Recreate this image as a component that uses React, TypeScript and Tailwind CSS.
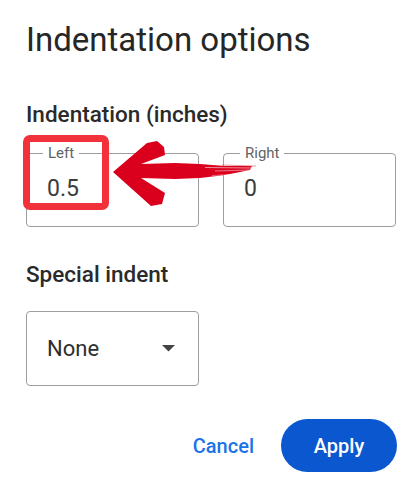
import React from "react"

function Field({ label, value }: { label: string; value: string }) {
  return (
    <div className="relative h-[74px] w-[173px] rounded-[4px] border border-[#9e9e9e]">
      <span className="absolute left-[16px] top-[-11px] bg-white px-[5px] text-[15px] leading-[20px] text-[#5f6368]">
        {label}
      </span>
      <div className="pl-[20px] pt-[21px] text-[23px] leading-[28px] text-[#3c3c3c]">{value}</div>
    </div>
  )
}

export default function App() {
  return (
    <div className="relative h-[490px] w-[418px] overflow-hidden bg-white pl-[26px] pr-[21px] font-['Roboto','Liberation_Sans',sans-serif]">
      <h1 className="pt-[20px] text-[33px] leading-[40px] text-[#262626]">Indentation options</h1>

      <h2 className="mt-[40px] text-[22.5px] font-medium leading-[28px] text-[#2a2a2a]">Indentation (inches)</h2>

      <div className="mt-[25px] flex gap-[24px]">
        <Field label="Left" value="0.5" />
        <Field label="Right" value="0" />
      </div>

      <h2 className="mt-[33px] text-[22.5px] font-medium leading-[28px] text-[#2a2a2a]">Special indent</h2>

      <div className="mt-[23px] flex h-[75px] w-[173px] items-center justify-between rounded-[4px] border border-[#9e9e9e] pl-[20px] pr-[23px]">
        <span className="text-[22px] leading-[28px] text-[#2e2e2e]">None</span>
        <svg width="13" height="7" viewBox="0 0 13 7">
          <path d="M0 0 L13 0 L6.5 6.5 Z" fill="#444" />
        </svg>
      </div>

      <div className="mt-[33px] flex items-center justify-end gap-[27px]">
        <button className="text-[20px] font-medium leading-[24px] text-[#1a73e8]">Cancel</button>
        <button className="h-[53px] w-[116px] rounded-full bg-[#0b57d0] text-[20px] font-medium text-white">
          Apply
        </button>
      </div>

      {/* highlight box over the Left field */}
      <div className="pointer-events-none absolute left-[23px] top-[135px] h-[75px] w-[86px] rounded-[7px] border-[7px] border-[#f2323b]" />

      {/* brush arrow */}
      <svg className="pointer-events-none absolute left-0 top-0" width="418" height="490" viewBox="0 0 418 490">
        <path
          d="M113 172 L147 143 L157 141 L164 147 L165 155 L141 164 L175 163 L200 164 L225 166 L252 166 L250 170 L225 175 L200 178 L175 179 L141 178 L165 193 L162 204 L151 206 Z"
          fill="#da001d"
        />
        <path d="M205 167.5 L252 168" stroke="#ffffff" strokeWidth="0.8" opacity="0.7" />
        <path d="M215 171 L250 170" stroke="#ffffff" strokeWidth="0.8" opacity="0.6" />
        <path d="M222 165 L256 166" stroke="#e85560" strokeWidth="1" opacity="0.6" />
        <path d="M212 175.5 L240 174" stroke="#ffffff" strokeWidth="0.8" opacity="0.5" />
      </svg>
    </div>
  )
}
